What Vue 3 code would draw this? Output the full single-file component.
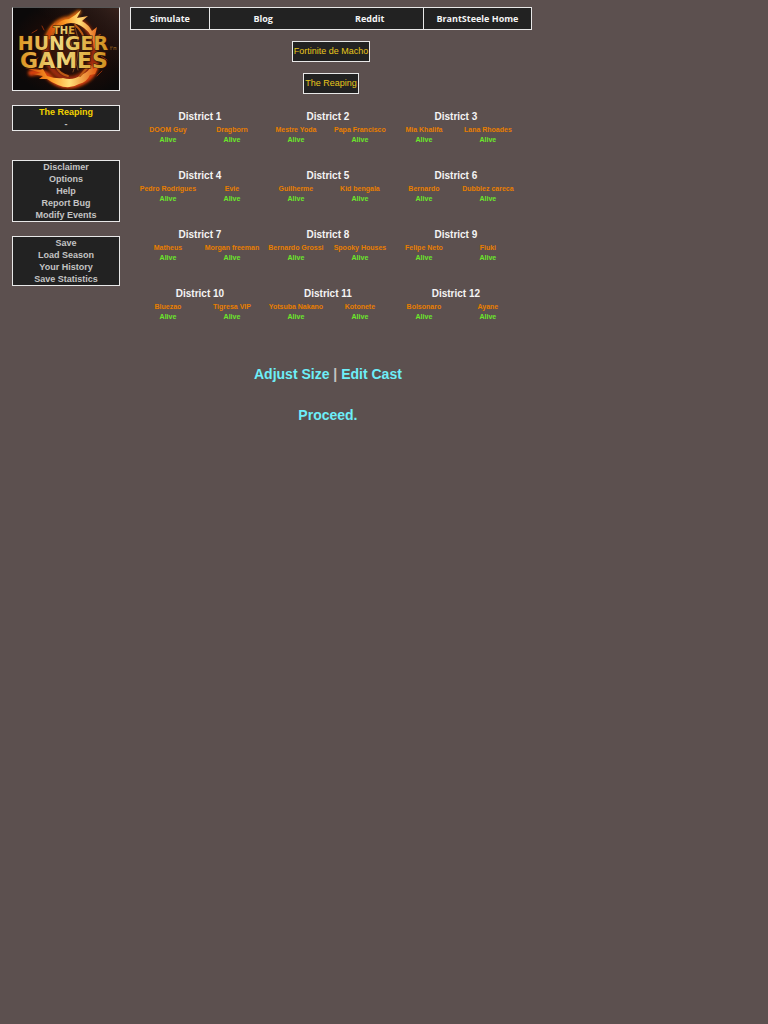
<template>
  <div class="page">
    <aside class="sidebar">
      <a href="#" class="logo" aria-label="The Hunger Games">
        <svg viewBox="0 0 106 82" preserveAspectRatio="none">
          <defs>
            <linearGradient id="gold" x1="0" y1="0" x2="1" y2="0">
              <stop offset="0" stop-color="#dc9420" />
              <stop offset="0.45" stop-color="#f0d980" />
              <stop offset="0.7" stop-color="#e4b950" />
              <stop offset="1" stop-color="#cf8e1e" />
            </linearGradient>
            <radialGradient id="night" cx="0.55" cy="0.5" r="0.6">
              <stop offset="0" stop-color="#4a1c0c" />
              <stop offset="0.6" stop-color="#190b08" />
              <stop offset="1" stop-color="#0b0909" />
            </radialGradient>
            <linearGradient id="smoke" x1="0" y1="1" x2="1" y2="0">
              <stop offset="0.6" stop-color="#2a1814" stop-opacity="0" />
              <stop offset="1" stop-color="#38231d" />
            </linearGradient>
            <linearGradient id="flame" x1="0" y1="0" x2="1" y2="0">
              <stop offset="0" stop-color="#c23a06" />
              <stop offset="0.35" stop-color="#ff9a24" />
              <stop offset="0.6" stop-color="#ffdf78" />
              <stop offset="1" stop-color="#e0500a" />
            </linearGradient>
            <filter id="glow" x="-20%" y="-20%" width="140%" height="140%">
              <feGaussianBlur stdDeviation="1.5" />
            </filter>
          </defs>
          <rect width="106" height="82" fill="url(#night)" />
          <rect width="106" height="82" fill="url(#smoke)" />
          <g filter="url(#glow)" fill="none" stroke-linecap="round">
            <ellipse cx="57" cy="41" rx="24" ry="30" stroke="#9c2c08" stroke-width="6" />
            <path d="M18 65 Q32 62 38 71 Q54 84 73 72 Q82 66 83 57" stroke="#d8400a" stroke-width="6" />
            <path d="M34 29 Q40 13 55 11 L66 4" stroke="#e06a10" stroke-width="4" />
          </g>
          <path fill="url(#flame)" d="M33 31 Q35 19 42 15 L41 19 Q48 11 56 11 Q62 8 68 2 L64 10 L75 8 L69 13 Q76 17 79 23 L84 19 L82 28 L88 26 L83 34 Q84 38 81 41 Q81 27 71 20 Q60 12 50 17 Q41 20 38 31 Z" />
          <path fill="url(#flame)" d="M30 61 L34 68 Q43 71 50 70 Q60 73 68 67 Q76 64 79 57 L80 61 L86 57 L82 66 L77 67 Q74 74 66 76 Q56 82 45 77 Q38 74 34 71 L26 71 L30 68 L20 66 L28 65 L12 60 L27 62 Z" />
          <g fill="none" stroke-linecap="round">
            <path d="M43 22 Q38 27 39 33 M62 17 Q71 24 72 36 M44 60 Q47 66 55 68 M67 68 L74 60" stroke="#bd5a14" stroke-width="2" />
            <path d="M54 20 L65 62 M62 19 Q70 40 60 64 M50 22 L46 62" stroke="#7c4522" stroke-width="1" />
            <path d="M19 25 L24 22 M25 50 L18 54 M88 48 L94 52 M89 63 L84 68 M31 22 L29 18" stroke="#8e2c0a" stroke-width="1" />
          </g>
          <g class="logo-text" text-anchor="middle" fill="url(#gold)" stroke="#2b1305" stroke-width="1" paint-order="stroke">
            <text x="51" y="26" font-size="10">THE</text>
            <text x="50" y="42" font-size="19">HUNGER</text>
            <text x="51" y="60" font-size="22">GAMES</text>
          </g>
          <path d="M97 39 h3 M98 39 v3 M101 42 v-3 l1 1 l1 -1 v3" stroke="#b87820" stroke-width="0.5" fill="none" />
        </svg>
      </a>

      <div class="box status">
        <a href="#">The Reaping</a>
        <span>-</span>
      </div>
      <nav v-for="(menu, i) in menus" :key="i" class="box menu">
        <a v-for="item in menu" :key="item" href="#">{{ item }}</a>
      </nav>
    </aside>

    <main class="main">
      <nav class="topnav">
        <a href="#">Simulate</a>
        <div class="middle">
          <a href="#">Blog</a>
          <a href="#">Reddit</a>
        </div>
        <a href="#">BrantSteele Home</a>
      </nav>

      <h1 class="title">Fortinite de Macho</h1>
      <h2 class="title">The Reaping</h2>

      <div class="districts">
        <section v-for="(tributes, i) in districts" :key="i" class="district">
          <h3>District {{ i + 1 }}</h3>
          <div class="tributes">
            <div v-for="name in tributes" :key="name" class="tribute">
              <span class="name">{{ name }}</span>
              <span class="alive">Alive</span>
            </div>
          </div>
        </section>
      </div>

      <div class="actions">
        <p><a href="#">Adjust Size</a> | <a href="#">Edit Cast</a></p>
        <p><a href="#">Proceed.</a></p>
      </div>
    </main>
  </div>
</template>

<script setup>
const menus = [
  ['Disclaimer', 'Options', 'Help', 'Report Bug', 'Modify Events'],
  ['Save', 'Load Season', 'Your History', 'Save Statistics'],
]

const districts = [
  ['DOOM Guy', 'Dragborn'],
  ['Mestre Yoda', 'Papa Francisco'],
  ['Mia Khalifa', 'Lana Rhoades'],
  ['Pedro Rodrigues', 'Evie'],
  ['Guilherme', 'Kid bengala'],
  ['Bernardo', 'Dubblez careca'],
  ['Matheus', 'Morgan freeman'],
  ['Bernardo Grossi', 'Spooky Houses'],
  ['Felipe Neto', 'Fiuki'],
  ['Bluezao', 'Tigresa VIP'],
  ['Yotsuba Nakano', 'Kotonete'],
  ['Bolsonaro', 'Ayane'],
]
</script>

<style>
body {
  margin: 0;
  background: #5c504f;
}
</style>

<style scoped>
.page {
  display: grid;
  grid-template-columns: 54fr 201fr;
  column-gap: 10px;
  box-sizing: border-box;
  width: calc(69% + 2px);
  padding: 7px 0 0 12px;
  font-family: "Liberation Sans", Arial, sans-serif;
  font-weight: bold;
  color: #c4c4c4;
}

a {
  color: inherit;
  text-decoration: none;
}

.logo {
  display: block;
  border: 1px solid #e8e8e8;
  border-top-color: #555;
  margin-bottom: 14px;
}

.logo svg {
  display: block;
  width: 100%;
  height: 82px;
}

.logo-text {
  font-family: "DejaVu Sans", sans-serif;
  font-weight: bold;
}

.box {
  display: flex;
  flex-direction: column;
  border: 1px solid #e8e8e8;
  background: #222;
  font-size: 9px;
  line-height: 12px;
  text-align: center;
}

.status {
  margin-bottom: 29px;
}

.status a {
  color: #f2d200;
}

.menu {
  margin-bottom: 14px;
}

.topnav {
  display: grid;
  grid-template-columns: 78fr 215fr 107fr;
  border: 1px solid #e8e8e8;
  background: #222;
  color: #f4f4f4;
  font-family: "Open Sans", "Noto Sans", sans-serif;
  font-size: 9px;
  line-height: 21px;
  text-align: center;
}

.middle {
  display: grid;
  grid-template-columns: 1fr 1fr;
  border: solid #e8e8e8;
  border-width: 0 1px;
}

.title {
  width: fit-content;
  margin: 11px auto 10px;
  padding: 0 1px;
  border: 1px solid #e8e8e8;
  background: #222;
  color: #e8c51c;
  font-size: 9px;
  font-weight: normal;
  line-height: 19px;
}

.districts {
  display: grid;
  grid-template-columns: repeat(3, 1fr);
  row-gap: 24px;
  padding: 6px 12px 0 6px;
  text-align: center;
}

.district h3 {
  margin: 0 0 1px;
  color: #f4f4f4;
  font-size: 10px;
  line-height: 14px;
}

.tributes {
  display: grid;
  grid-template-columns: 1fr 1fr;
}

.tribute {
  display: flex;
  flex-direction: column;
  font-size: 7px;
  line-height: 10px;
  white-space: nowrap;
}

.name {
  color: #e87e00;
}

.alive {
  color: #6be82a;
}

.actions {
  padding: 42px 12px 0 6px;
  font-size: 14px;
  line-height: 20px;
  text-align: center;
}

.actions p {
  margin: 0 0 21px;
}

.actions a {
  color: #6deef8;
}
</style>
